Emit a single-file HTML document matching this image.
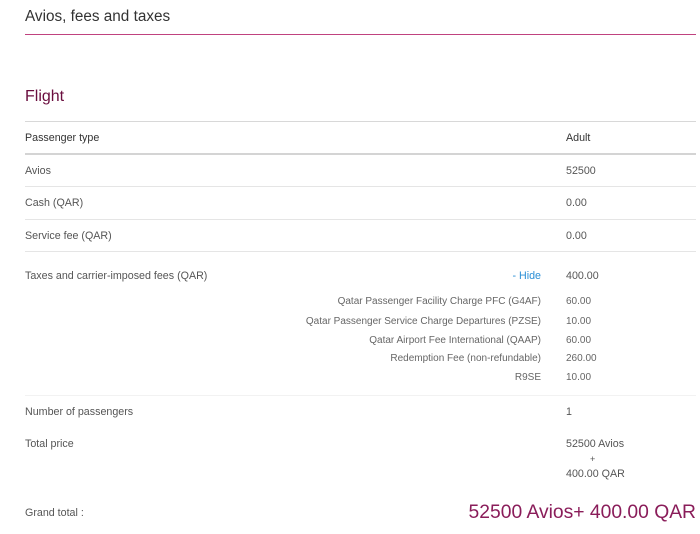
<!DOCTYPE html>
<html><head><style>
body{margin:0;width:700px;height:534px;background:#fff;font-family:"Liberation Sans",sans-serif;position:relative;overflow:hidden}
div{position:absolute;white-space:nowrap}
.t{font-size:10.7px;color:#555}
.s{font-size:10px;color:#666;text-align:right;right:159px}
.v{left:566px}
.sv{left:566px;font-size:10px;color:#666}
.ln{left:25px;width:671px;height:1px;background:#e5e5e5}
</style></head><body>
<div style="left:25px;top:8px;font-size:15.3px;color:#333">Avios, fees and taxes</div>
<div style="left:25px;top:34px;width:671px;height:1px;background:#c0427f"></div>
<div style="left:25px;top:88px;font-size:16px;color:#6a0d3e">Flight</div>
<div class="ln" style="top:121px;background:#d8d8d8"></div>
<div class="t" style="left:25px;top:132px;color:#333">Passenger type</div><div class="t v" style="top:132px;color:#333">Adult</div>
<div class="ln" style="top:153px;height:2px;background:#d4d4d4"></div>
<div class="t" style="left:25px;top:165px">Avios</div><div class="t v" style="top:165px">52500</div>
<div class="ln" style="top:186px"></div>
<div class="t" style="left:25px;top:197px">Cash (QAR)</div><div class="t v" style="top:197px">0.00</div>
<div class="ln" style="top:219px"></div>
<div class="t" style="left:25px;top:230px">Service fee (QAR)</div><div class="t v" style="top:230px">0.00</div>
<div class="ln" style="top:251px"></div>
<div class="t" style="left:25px;top:270px">Taxes and carrier-imposed fees (QAR)</div>
<div class="t" style="right:159px;top:270px;color:#2a8fd6">- Hide</div>
<div class="t v" style="top:270px">400.00</div>
<div class="s" style="top:296px">Qatar Passenger Facility Charge PFC (G4AF)</div><div class="sv" style="top:296px">60.00</div>
<div class="s" style="top:316px">Qatar Passenger Service Charge Departures (PZSE)</div><div class="sv" style="top:316px">10.00</div>
<div class="s" style="top:335px">Qatar Airport Fee International (QAAP)</div><div class="sv" style="top:335px">60.00</div>
<div class="s" style="top:353px">Redemption Fee (non-refundable)</div><div class="sv" style="top:353px">260.00</div>
<div class="s" style="top:372px">R9SE</div><div class="sv" style="top:372px">10.00</div>
<div class="ln" style="top:395px;background:#f2f2f2"></div>
<div class="t" style="left:25px;top:406px">Number of passengers</div><div class="t v" style="top:406px">1</div>
<div class="t" style="left:25px;top:438px">Total price</div>
<div class="t v" style="top:438px">52500 Avios</div>
<div class="t" style="left:590px;top:454px;font-size:9px">+</div>
<div class="t v" style="top:468px">400.00 QAR</div>
<div class="t" style="left:25px;top:507px">Grand total :</div>
<div style="right:4px;top:502px;font-size:19.3px;color:#8a1d5a">52500 Avios+ 400.00 QAR</div>
</body></html>
